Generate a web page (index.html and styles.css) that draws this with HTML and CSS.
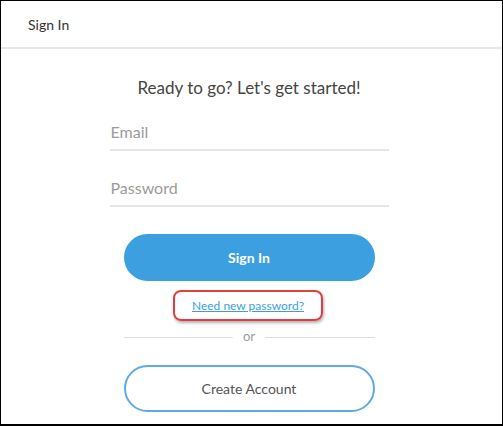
FILE: index.html
```html
<!DOCTYPE html>
<html>
<head>
<meta charset="utf-8">
<link rel="stylesheet" href="styles.css">
</head>
<body>
<div class="frame">
  <header class="topbar">Sign In</header>
  <main class="content">
    <h1 class="title">Ready to go? Let's get started!</h1>
    <div class="field">Email</div>
    <div class="field">Password</div>
    <button class="btn btn-primary">Sign In</button>
    <div class="link-wrap"><a class="link" href="#">Need new password?</a></div>
    <div class="divider"><span class="line"></span><span class="or">or</span><span class="line"></span></div>
    <button class="btn btn-outline">Create Account</button>
  </main>
</div>
</body>
</html>
```

FILE: styles.css
```css
html, body {
  margin: 0;
  padding: 0;
  background: #fff;
}
.frame {
  box-sizing: border-box;
  width: 503px;
  height: 426px;
  border-style: solid;
  border-color: #000;
  border-width: 1px 1px 2px 1px;
  overflow: hidden;
  font-family: Lato, "Open Sans", sans-serif;
}
.topbar {
  box-sizing: border-box;
  height: 48px;
  padding: 15px 0 0 27px;
  font-size: 14px;
  color: #333;
  border-bottom: 2px solid #e8e8e8;
}
.content {
  display: flex;
  flex-direction: column;
  align-items: center;
  padding-right: 5px;
}
.title {
  margin: 27px 0 0;
  font-size: 17px;
  font-weight: 400;
  color: #444;
  line-height: 23px;
}
.field {
  box-sizing: border-box;
  width: 279px;
  height: 41px;
  margin-top: 11px;
  padding: 12px 0 0 1px;
  font-size: 16px;
  color: #9b9b9b;
  border-bottom: 2px solid #e6e6e6;
}
.field + .field {
  margin-top: 15px;
}
.btn {
  box-sizing: border-box;
  width: 251px;
  height: 47px;
  border-radius: 24px;
  font-family: Lato, "Open Sans", sans-serif;
  font-size: 14px;
  cursor: pointer;
}
.btn-primary {
  margin-top: 27px;
  background: #3c9fe0;
  border: none;
  color: #fff;
  font-weight: 700;
}
.link-wrap {
  box-sizing: border-box;
  margin-top: 9px;
  width: 150px;
  height: 31px;
  border: 2px solid #e33d44;
  border-radius: 8px;
  box-shadow: 1px 2px 3px rgba(0,0,0,0.3);
  display: flex;
  align-items: center;
  justify-content: center;
  position: relative;
  left: -1px;
}
.link {
  font-size: 12px;
  color: #3a9fe0;
  text-decoration: underline;
}
.divider {
  width: 251px;
  display: flex;
  align-items: center;
  margin-top: 7px;
  height: 18px;
}
.line {
  flex: 1;
  height: 1px;
  background: #ddd;
}
.or {
  padding: 0 10px 2px;
  font-size: 13px;
  color: #9b9b9b;
}
.btn-outline {
  margin-top: 19px;
  background: #fff;
  border: 2px solid #5daae6;
  color: #555;
}
```
